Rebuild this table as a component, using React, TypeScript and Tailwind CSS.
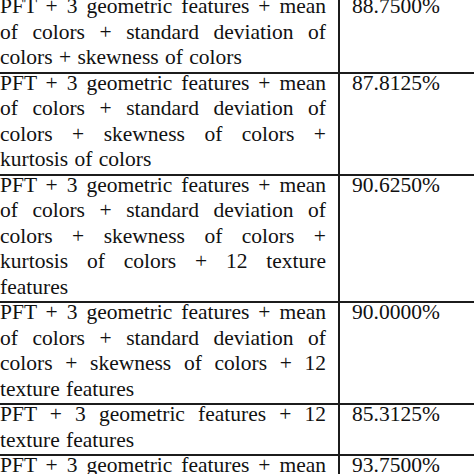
const ROWS: { lines: string[]; value: string }[] = [
  {
    lines: [
      'PFT + 3 geometric features + mean',
      'of colors + standard deviation of',
      'colors + skewness of colors',
    ],
    value: '88.7500%',
  },
  {
    lines: [
      'PFT + 3 geometric features + mean',
      'of colors + standard deviation of',
      'colors + skewness of colors +',
      'kurtosis of colors',
    ],
    value: '87.8125%',
  },
  {
    lines: [
      'PFT + 3 geometric features + mean',
      'of colors + standard deviation of',
      'colors + skewness of colors +',
      'kurtosis of colors + 12 texture',
      'features',
    ],
    value: '90.6250%',
  },
  {
    lines: [
      'PFT + 3 geometric features + mean',
      'of colors + standard deviation of',
      'colors + skewness of colors + 12',
      'texture features',
    ],
    value: '90.0000%',
  },
  {
    lines: ['PFT + 3 geometric features + 12', 'texture features'],
    value: '85.3125%',
  },
  {
    lines: [
      'PFT + 3 geometric features + mean',
      'of colors + standard deviation of',
      'colors + skewness of colors',
    ],
    value: '93.7500%',
  },
];

function Row({ lines, value }: { lines: string[]; value: string }) {
  return (
    <div className="flex border-b-2 border-[#1c1c1c]">
      <div className="w-[352px] shrink-0 border-r-2 border-[#1c1c1c] px-[12px]">
        <div className="-mt-[3px] mb-[1px]">
          {lines.map((line, i) => (
            <div
              key={i}
              className={
                i < lines.length - 1
                  ? 'text-justify [text-align-last:justify] whitespace-nowrap'
                  : 'text-left whitespace-nowrap [word-spacing:1px]'
              }
            >
              {line}
            </div>
          ))}
        </div>
      </div>
      <div className="w-[160px] shrink-0 pl-[12px]">
        <div className="-mt-[3px]">{value}</div>
      </div>
    </div>
  );
}

export default function App() {
  return (
    <div className="w-[474px] h-[474px] overflow-hidden bg-white">
      <div className="-mt-[3px] -ml-[12px] font-['Liberation_Serif',serif] text-[21.5px] leading-[25.5px] text-[#111111]">
        {ROWS.map((row, i) => (
          <Row key={i} lines={row.lines} value={row.value} />
        ))}
      </div>
    </div>
  );
}
